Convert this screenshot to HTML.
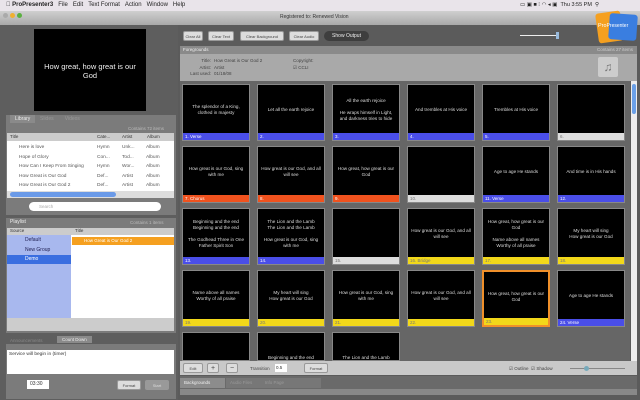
<!DOCTYPE html><html><head><style>
*{margin:0;padding:0;box-sizing:border-box}
body{width:640px;height:400px;overflow:hidden;background:#5b5b5b;font-family:"Liberation Sans",sans-serif;position:relative}
.a{position:absolute}
.s{position:absolute;width:68px;height:57px;background:#000;border:1px solid #888}
.s .t{position:absolute;left:0;right:0;top:0;height:49px;color:#ddd;font-size:4.6px;line-height:6px;text-align:center;display:flex;flex-direction:column;justify-content:center;padding:0 2px}
.s .b{position:absolute;left:0;right:0;bottom:0;height:7px;font-size:4.5px;color:#fff;padding-left:2px;line-height:7px}
.bl{background:#4a4ee8}.or{background:#f0521e}.ye{background:#f2d81a;color:#777!important}.gr{background:#ddd;color:#777!important}
.btn{position:absolute;height:10px;background:#ddd;border:1px solid #999;border-radius:2px;font-size:4px;color:#444;text-align:center;line-height:9px}
.f{font-size:5px;color:#333}
</style></head><body>
<div class="a" style="left:0;top:0;width:640px;height:11px;background:#e9e4ea"></div>
<div class="a f" style="left:6px;top:2px;font-size:6px;color:#222">&#63743; <b>ProPresenter3</b> &nbsp;&nbsp;File &nbsp;&nbsp;Edit &nbsp;&nbsp;Text Format &nbsp;&nbsp;Action &nbsp;&nbsp;Window &nbsp;&nbsp;Help</div>
<div class="a f" style="left:520px;top:2px;font-size:5.5px;color:#222">▭ ▣ ■ ⁝ ◠ ◂ ▣ &nbsp;Thu 3:55 PM &nbsp;⚲</div>
<div class="a" style="left:0;top:11px;width:640px;height:14px;background:linear-gradient(#cfcfcf,#a9a9a9)"></div>
<div class="a" style="left:3px;top:13px;width:5px;height:5px;border-radius:50%;background:#aaa"></div>
<div class="a" style="left:10px;top:13px;width:5px;height:5px;border-radius:50%;background:#f0b030"></div>
<div class="a" style="left:17px;top:13px;width:5px;height:5px;border-radius:50%;background:#5ab040"></div>
<div class="a f" style="left:280px;top:14px;font-size:5px;color:#333">Registered to: Renewed Vision</div>
<div class="a" style="left:597px;top:12px;width:25px;height:30px;background:#f5a020;border-radius:3px;transform:rotate(-8deg)"></div>
<div class="a" style="left:609px;top:14px;width:28px;height:26px;background:#3a7ee0;border-radius:3px;transform:rotate(4deg)"></div>
<div class="a" style="left:598px;top:23px;font-size:5.5px;color:#fff">Pro<span style="font-size:5px">Presenter</span></div>
<div class="a" style="left:0;top:25px;width:178px;height:375px;background:#5e5e5e"></div>
<div class="a" style="left:34px;top:29px;width:112px;height:82px;background:#000;color:#eee;font-size:7.5px;text-align:center;padding:33px 6px 0;line-height:9px">How great, how great is our God</div>
<!-- library -->
<div class="a" style="left:6px;top:115px;width:170px;height:100px;background:#7b7b7b"></div>
<div class="a f" style="left:10px;top:115px;color:#eee;background:#8a8a8a;padding:1px 5px">Library</div>
<div class="a f" style="left:40px;top:116px;color:#999">Slides &nbsp;&nbsp;&nbsp;&nbsp;&nbsp;&nbsp; Videos</div>
<div class="a f" style="left:128px;top:126px;color:#bbb;font-size:4.5px">Contains 72 items</div>
<div class="a" style="left:7px;top:133px;width:167px;height:8px;background:#ccc;font-size:4.5px;color:#333;padding:1px 3px">Title<span style="position:absolute;left:90px">Cate...</span><span style="position:absolute;left:115px">Artist</span><span style="position:absolute;left:140px">Album</span></div>
<div class="a" style="left:7px;top:141px;width:167px;height:50px;background:#fff;font-size:4.8px;color:#555;line-height:9.5px;padding:2px 0 0 12px">Here is love<br>Hope of Glory<br>How Can I Keep From Singing<br>How Great is Our God<br>How Great is Our God 2</div>
<div class="a" style="left:97px;top:143px;font-size:4.8px;color:#555;line-height:9.5px">Hymn<br>Con...<br>Hymn<br>Def...<br>Def...</div>
<div class="a" style="left:122px;top:143px;font-size:4.8px;color:#555;line-height:9.5px">Unk...<br>Tod...<br>Wor...<br>Artist<br>Artist</div>
<div class="a" style="left:146px;top:143px;font-size:4.8px;color:#555;line-height:9.5px">Album<br>Album<br>Album<br>Album<br>Album</div>
<div class="a" style="left:7px;top:191px;width:167px;height:7px;background:#ddd"></div>
<div class="a" style="left:10px;top:192px;width:106px;height:5px;background:#6a9ae8;border-radius:3px"></div>
<div class="a" style="left:29px;top:202px;width:132px;height:9px;background:#fff;border-radius:5px;font-size:4.5px;color:#aaa;padding:2px 10px">Search</div>
<!-- playlist -->
<div class="a" style="left:6px;top:218px;width:170px;height:115px;background:#7b7b7b"></div>
<div class="a f" style="left:10px;top:219px;color:#eee">Playlist</div>
<div class="a f" style="left:130px;top:220px;color:#bbb;font-size:4.5px">Contains 1 items</div>
<div class="a" style="left:7px;top:228px;width:167px;height:7px;background:#ccc;font-size:4.5px;color:#333;padding:0 3px">Source<span style="position:absolute;left:68px">Title</span></div>
<div class="a" style="left:7px;top:235px;width:64px;height:83px;background:#a8b8ee;font-size:5px;color:#225;line-height:9.5px;padding:1px 0 0 18px">Default<br>New Group<br><span style="color:#fff">Demo</span></div>
<div class="a" style="left:7px;top:255px;width:64px;height:9px;background:#3a6ee0"></div>
<div class="a" style="left:25px;top:256px;font-size:5px;color:#fff">Demo</div>
<div class="a" style="left:71px;top:235px;width:103px;height:83px;background:#fff"></div>
<div class="a" style="left:72px;top:237px;width:102px;height:8px;background:#f5a020;font-size:4.5px;color:#fff;padding:1px 0 0 12px">How Great is Our God 2</div>
<div class="a" style="left:7px;top:318px;width:167px;height:13px;background:#ccc"></div>
<!-- countdown -->
<div class="a f" style="left:10px;top:338px;color:#888;font-size:4.5px">Announcements</div>
<div class="a f" style="left:57px;top:336px;color:#eee;background:#8a8a8a;padding:1px 5px;font-size:4.5px">Count Down</div>
<div class="a" style="left:6px;top:344px;width:170px;height:55px;background:#7b7b7b"></div>
<div class="a" style="left:7px;top:350px;width:167px;height:24px;background:#fff;font-size:4.8px;color:#333;padding:2px">Service will begin in (timer)</div>
<div class="a" style="left:27px;top:380px;width:22px;height:9px;background:#fff;font-size:5px;color:#333;padding:1px 3px">03:30</div>
<div class="btn" style="left:117px;top:380px;width:24px">Format</div>
<div class="btn" style="left:145px;top:380px;width:24px;background:#999;color:#ddd">Start</div>
<!-- top buttons -->
<div class="btn" style="left:183px;top:31px;width:20px">Clear All</div>
<div class="btn" style="left:208px;top:31px;width:26px">Clear Text</div>
<div class="btn" style="left:240px;top:31px;width:44px">Clear Background</div>
<div class="btn" style="left:289px;top:31px;width:30px">Clear Audio</div>
<div class="a" style="left:324px;top:31px;width:45px;height:10px;background:#3e3e3e;border-radius:5px;font-size:5px;color:#eee;text-align:center;line-height:10px">Show Output</div>
<div class="a" style="left:520px;top:35px;width:38px;height:1px;background:#eee"></div>
<div class="a" style="left:556px;top:32px;width:3px;height:7px;background:#9bd"></div>
<!-- editor header -->
<div class="a" style="left:180px;top:46px;width:457px;height:8px;background:#8a8a8a;font-size:4.5px;color:#eee;padding:1px 3px">Foregrounds<span style="position:absolute;right:4px;color:#ccc">Contains 27 items</span></div>
<div class="a" style="left:180px;top:54px;width:457px;height:27px;background:#a9a9a9"></div>
<div class="a" style="left:181px;top:58px;font-size:4.5px;color:#444;line-height:6.5px;text-align:right;width:30px">Title:<br>Artist:<br>Last used:</div>
<div class="a" style="left:214px;top:58px;font-size:4.5px;color:#444;line-height:6.5px">How Great is Our God 2<br>Artist<br>01/18/08</div>
<div class="a" style="left:293px;top:58px;font-size:4.5px;color:#444;line-height:6.5px">Copyright:<br>☑ CCLI</div>
<div class="a" style="left:598px;top:57px;width:20px;height:20px;background:#ccc;border-radius:2px;text-align:center;font-size:12px;color:#777;line-height:20px">♫</div>
<!-- grid bg -->
<div class="a" style="left:180px;top:81px;width:450px;height:280px;background:#666"></div>
<div class="a" style="left:631px;top:81px;width:6px;height:280px;background:#eee"></div>
<div class="a" style="left:632px;top:84px;width:4px;height:30px;background:#6aa0e8;border-radius:2px"></div>
<div id="g"></div>
<!-- bottom toolbar -->
<div class="a" style="left:180px;top:361px;width:457px;height:14px;background:#c9c9c9"></div>
<div class="btn" style="left:183px;top:363px;width:20px">Edit</div>
<div class="btn" style="left:207px;top:363px;width:12px;font-size:7px">+</div>
<div class="btn" style="left:226px;top:363px;width:12px;font-size:7px">−</div>
<div class="a" style="left:250px;top:366px;font-size:4.5px;color:#444">Transition</div>
<div class="a" style="left:275px;top:364px;width:12px;height:8px;background:#fff;font-size:4.5px;color:#333;padding:1px">0.5</div>
<div class="btn" style="left:304px;top:363px;width:24px">Format</div>
<div class="a" style="left:509px;top:366px;font-size:4.5px;color:#444">☑ Outline &nbsp;☑ Shadow</div>
<div class="a" style="left:570px;top:368px;width:55px;height:1px;background:#888"></div>
<div class="a" style="left:584px;top:366px;width:5px;height:5px;border-radius:50%;background:#7ab"></div>
<div class="a" style="left:180px;top:376px;width:457px;height:14px;background:#6a6a6a"></div>
<div class="a" style="left:180px;top:378px;width:45px;height:10px;background:#8c8c8c;font-size:4.5px;color:#eee;padding:2px 4px">Backgrounds</div>
<div class="a" style="left:226px;top:378px;width:95px;height:10px;background:#777;font-size:4.5px;color:#999;padding:2px 4px">Audio Files &nbsp;&nbsp;&nbsp;&nbsp;&nbsp;&nbsp;&nbsp;&nbsp; Info Page</div>
<div class="a" style="left:180px;top:389px;width:457px;height:6px;background:#888"></div>
<script>
var d=[
["The splendor of a King,<br>clothed in majesty","1. Verse","bl"],["Let all the earth rejoice","2.","bl"],["All the earth rejoice<br><br>He wraps himself in Light,<br>and darkness tries to hide","3.","bl"],["And trembles at His voice","4.","bl"],["Trembles at His voice","5.","bl"],["","6.","gr"],
["How great is our God, sing<br>with me","7. Chorus","or"],["How great is our God, and all<br>will see","8.","or"],["How great, how great is our<br>God","9.","or"],["","10.","gr"],["Age to age He stands","11. Verse","bl"],["And time is in His hands","12.","bl"],
["Beginning and the end<br>Beginning and the end<br><br>The Godhead Three in One<br>Father Spirit Son","13.","bl"],["The Lion and the Lamb<br>The Lion and the Lamb<br><br>How great is our God, sing<br>with me","14.","bl"],["","15.","gr"],["How great is our God, and all<br>will see","16. Bridge","ye"],["How great, how great is our<br>God<br><br>Name above all names<br>Worthy of all praise","17.","ye"],["My heart will sing<br>How great is our God","18.","ye"],
["Name above all names<br>Worthy of all praise","19.","ye"],["My heart will sing<br>How great is our God","20.","ye"],["How great is our God, sing<br>with me","21.","ye"],["How great is our God, and all<br>will see","22.","ye"],["How great, how great is our<br>God","23.","ye"],["Age to age He stands","24. Verse","bl"],
["<br><br><br><br>And time is in His hands","",""],["<br>Beginning and the end<br>Beginning and the end","",""],["<br>The Lion and the Lamb<br>The Lion and the Lamb","",""]];
var h="";d.forEach(function(s,i){var c=i%6,r=Math.floor(i/6);var x=182+c*75,y=84+r*62;
h+='<div class="s" style="left:'+x+'px;top:'+y+'px;height:'+(r==4?(361-y):57)+'px;'+(i==22?'border:2px solid #f0902a;':'')+'"><div class="t">'+s[0]+'</div>'+(s[2]?'<div class="b '+s[2]+'">'+s[1]+'</div>':'')+'</div>';});
document.getElementById("g").outerHTML=h;
</script>
</body></html>
